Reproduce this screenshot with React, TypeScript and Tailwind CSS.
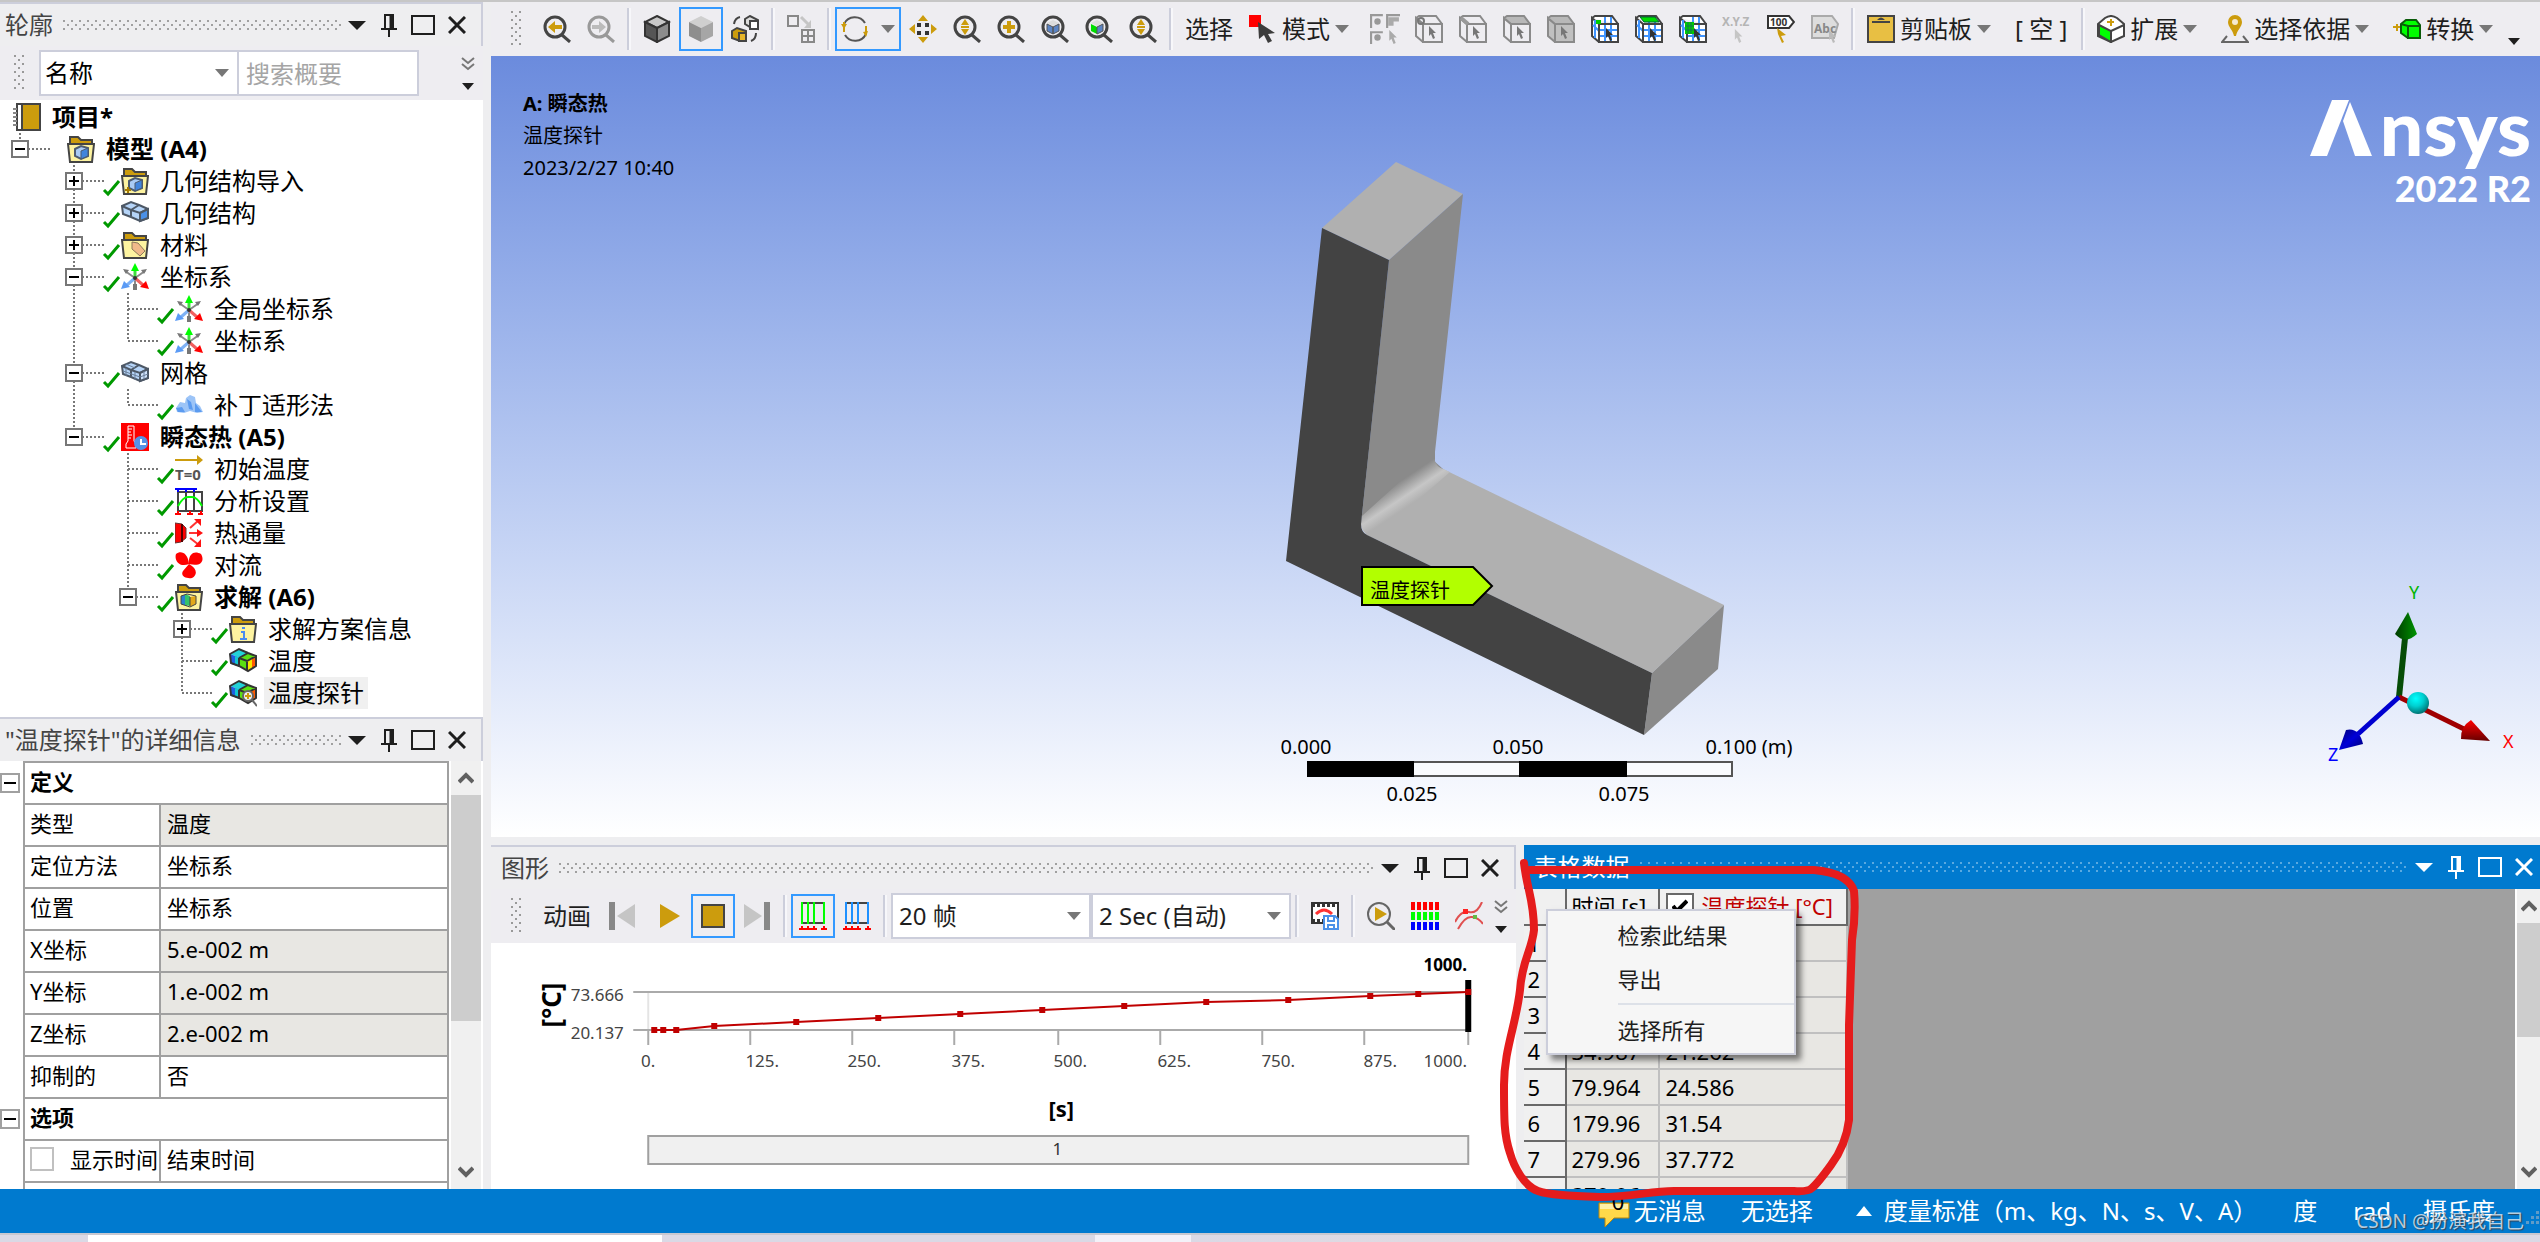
import type { ReactNode } from 'react';
import clsx from 'clsx';

interface TreeNode {
  depth: number;
  label: string;
  suffix?: string;
  icon: ReactNode;
  box?: 'plus' | 'minus';
  selected?: boolean;
}

interface DetailRow {
  name: string;
  value?: string;
  readOnly?: boolean;
}

const DARK = '#444';
const GOLD = '#cc9c0d';

/* ---------- tree icons ---------- */

function Icon({ children, size = 28 }: { children: ReactNode; size?: number }) {
  return (
    <svg width={size} height={size} viewBox="0 0 28 28" fill="none" className="shrink-0" aria-hidden="true">
      {children}
    </svg>
  );
}

function FolderShape({ children }: { children?: ReactNode }) {
  return (
    <Icon>
      <path d="M3 9V2h8l3 3h11v5" fill={GOLD} stroke={DARK} strokeWidth="2" />
      <path d="M1 9h26l-2 18H3z" fill="#fdf3a0" stroke={DARK} strokeWidth="2" />
      {children}
    </Icon>
  );
}

function SmallCube() {
  return (
    <>
      <path d="M8 14l6-3 7 2v8l-7 3-6-3z" fill="#a9cbf5" stroke="#4d5b70" strokeWidth="2" />
      <path d="M14 16l7-3v8l-7 3z" fill="#4285dc" stroke="#4d5b70" />
    </>
  );
}

function BlocksIcon({ mesh = false }: { mesh?: boolean }) {
  return (
    <Icon>
      <path d="M1 7l9-4 8 3 9 4v9l-8 3-9-4-8-3z" fill="#b5d4f8" stroke="#4d5866" strokeWidth="2" />
      <path d="M1 7l9 4v6M10 11l8-5M10 11l9 3 8-4" stroke="#4d5866" strokeWidth="2" />
      <path d="M19 14l8-4v9l-8 3z" fill={mesh ? '#cfe2fa' : '#4a90e8'} stroke="#4d5866" strokeWidth="2" />
      {mesh && <path d="M5 5l9 4M5 9v8M14 13v8M19 18l8-3M23 12v8M2 12l17 6" stroke="#6b7f99" />}
    </Icon>
  );
}

function CoordIcon() {
  return (
    <Icon>
      <path d="M14 15L4 8M14 15l10-7M14 15v12" stroke="#8a8a8a" strokeWidth="2" />
      <path d="M2 6l6 1-3 4zM26 6l-6 1 3 4zM12 21h4v6h-4z" fill="#777" />
      <path d="M14 15V5" stroke="#3fdc3f" strokeWidth="3" />
      <path d="M14 0l4 8h-8z" fill="#0f0" />
      <path d="M14 15l-8 7" stroke="#7fb2f5" strokeWidth="3" />
      <path d="M0 26l3-8 6 6z" fill="#5b9bf5" />
      <path d="M14 15l8 7" stroke="#f06060" strokeWidth="3" />
      <path d="M28 26l-3-8-6 6z" fill="#f00" />
      <circle cx="14" cy="15" r="2" fill="#333" />
    </Icon>
  );
}

function ContourCube() {
  return (
    <>
      <path d="M1 7l9-5 9 3-7 6z" fill="#22d3d8" />
      <path d="M1 7l11 4v9L2 17z" fill="#1f5fe0" />
      <path d="M6 9l6 2v9l-6-2z" fill="#12c9d0" />
      <path d="M10 11l9-5 8 3v10l-8 5-9-5z" fill="#5be012" />
      <path d="M18 13l9-4v10l-8 5z" fill="#f5e800" />
      <path d="M23 12l4-2v9l-4 3z" fill="#ff5a00" />
      <path d="M1 7l9-5 9 4 8 3v10l-8 5-9-5-8-3zM10 11l9-5M10 11v8M10 11l8 3 9-5M18 14v9" stroke="#333" strokeWidth="2" />
    </>
  );
}

function GlassOverlay() {
  return (
    <>
      <circle cx="19" cy="17" r="5" fill="#eee" stroke="#666" strokeWidth="2" />
      <path d="M23 21l5 6" stroke="#666" strokeWidth="2" />
      <path d="M19 14v6M16 17h6" stroke={GOLD} strokeWidth="2" />
    </>
  );
}

const tree: TreeNode[] = [
  {
    depth: 0,
    label: '项目',
    suffix: '*',
    icon: (
      <Icon>
        <path d="M4 1h23v26H4z" fill="#fff" stroke={DARK} strokeWidth="2" />
        <path d="M9 1h18v26H9z" fill={GOLD} stroke={DARK} strokeWidth="2" />
        <path d="M0 6h4M0 10h4M0 14h4M0 18h4M0 22h4" stroke="#888" strokeWidth="2" />
      </Icon>
    ),
  },
  { depth: 1, label: '模型', suffix: ' (A4)', box: 'minus', icon: <FolderShape><SmallCube /></FolderShape> },
  {
    depth: 2,
    label: '几何结构导入',
    box: 'plus',
    icon: (
      <FolderShape>
        <SmallCube />
        <path d="M7 20v6M4 23h6" stroke="#a87c00" strokeWidth="2" />
      </FolderShape>
    ),
  },
  { depth: 2, label: '几何结构', box: 'plus', icon: <BlocksIcon /> },
  {
    depth: 2,
    label: '材料',
    box: 'plus',
    icon: (
      <FolderShape>
        <path d="M11 11l6 1 7 8-5 5-8-7z" fill="#f0b98a" stroke="#8a7a5a" />
      </FolderShape>
    ),
  },
  { depth: 2, label: '坐标系', box: 'minus', icon: <CoordIcon /> },
  { depth: 3, label: '全局坐标系', icon: <CoordIcon /> },
  { depth: 3, label: '坐标系', icon: <CoordIcon /> },
  { depth: 2, label: '网格', box: 'minus', icon: <BlocksIcon mesh /> },
  {
    depth: 3,
    label: '补丁适形法',
    icon: (
      <Icon>
        <path d="M1 17l4-6 5 1 1-5 4-3 5 2 1 6 4 3 3 6-6 1-7-2-6 2-7-1z" fill="#9cc4f7" />
        <path d="M12 8l4 3 2 8-4-1zM1 17l6-1 3 5-7 0zM20 12l7 9-7 0z" fill="#5b9bf0" />
      </Icon>
    ),
  },
  {
    depth: 2,
    label: '瞬态热',
    suffix: ' (A5)',
    box: 'minus',
    icon: (
      <Icon>
        <path d="M0 0h28v28H0z" fill="#f00" />
        <path d="M7 3h6v15l2 3v4H5v-4l2-3z" stroke="#fff" strokeWidth="1" />
        <path d="M7 6h4M7 9h3M7 12h4M7 15h3" stroke="#fff" />
        <circle cx="20" cy="20" r="7" fill="#5591e6" />
        <path d="M20 16v5h5" stroke="#fff" strokeWidth="2" />
      </Icon>
    ),
  },
  {
    depth: 3,
    label: '初始温度',
    icon: (
      <Icon>
        <path d="M0 5h24" stroke={GOLD} strokeWidth="2" />
        <path d="M22 0l6 5-6 5z" fill={GOLD} />
        <text x="0" y="25" fontSize="15" fontWeight="700" fill="#555">T=0</text>
      </Icon>
    ),
  },
  {
    depth: 3,
    label: '分析设置',
    icon: (
      <Icon>
        <path d="M3 5h24v19H3zM11 3v21M19 3v21" stroke={DARK} strokeWidth="2" />
        <path d="M0 2h22M3 2v3M11 2v3M19 2v3" stroke="#00f" strokeWidth="2" />
        <path d="M3 19q5-9 10-9h4q5 0 10 9" stroke="#0f0" strokeWidth="2" />
        <path d="M0 27h6M12 27h6M23 27h6M3 24v3M15 24v3M26 24v3" stroke="#f00" strokeWidth="2" />
      </Icon>
    ),
  },
  {
    depth: 3,
    label: '热通量',
    icon: (
      <Icon>
        <path d="M0 4l7 1 4 4v10l-5 4-6 1z" fill="#f00" stroke="#633" strokeWidth="1" />
        <path d="M7 5v18" stroke="#500" strokeWidth="2" />
        <path d="M14 14h12M15 9l9-8M15 19l9 7" stroke="#f33" strokeWidth="2" />
        <path d="M22 10l6 4-6 4zM19 0h7v7zM26 20v8h-7z" fill="#f11" />
      </Icon>
    ),
  },
  {
    depth: 3,
    label: '对流',
    icon: (
      <Icon>
        <path d="M14 13C4 17-1 9 1 3c5-4 12-1 13 10zM14 13C13 3 19-1 26 3c4 7 0 13-12 10zM14 13c8 4 9 11 3 14-6 1-12-2-9-7z" fill="#f00" />
      </Icon>
    ),
  },
  {
    depth: 3,
    label: '求解',
    suffix: ' (A6)',
    box: 'minus',
    icon: (
      <FolderShape>
        <path d="M6 13l6-2v12l-6-2z" fill="#2a7fd0" />
        <path d="M10 11l5 2v10l-5-1z" fill="#35c26a" />
        <path d="M15 14l6-1v8l-6 3z" fill="#e3a81a" />
        <path d="M6 13l6-2 9 2v8l-6 3-9-3zM15 14v9" stroke={DARK} />
      </FolderShape>
    ),
  },
  {
    depth: 4,
    label: '求解方案信息',
    box: 'plus',
    icon: (
      <FolderShape>
        <path d="M13 13h3M12 17h3v7M11 24h7" stroke="#4a8cf0" strokeWidth="2" />
      </FolderShape>
    ),
  },
  { depth: 4, label: '温度', icon: <Icon><ContourCube /></Icon> },
  { depth: 4, label: '温度探针', selected: true, icon: <Icon><ContourCube /><GlassOverlay /></Icon> },
];

// true when a later sibling exists on the given level, so its guide line goes on
function levelContinues(index: number, depth: number) {
  for (let i = index + 1; i < tree.length; i++) {
    if (tree[i].depth < depth) return false;
    if (tree[i].depth === depth) return true;
  }
  return false;
}

function TreeGutter({ node, index }: { node: TreeNode; index: number }) {
  const width = 13 + 54 * node.depth;
  const ownX = 20 + 54 * (node.depth - 1);
  const levels = Array.from({ length: node.depth }, (_, i) => i + 1);
  return (
    <svg width={width} height="32" fill="none" className="shrink-0" aria-hidden="true">
      {levels.map((level) => {
        const x = 20 + 54 * (level - 1);
        const goesOn = levelContinues(index, level);
        if (level < node.depth && !goesOn) return null;
        return (
          <path key={level} d={`M${x} 0V${goesOn ? 32 : 16}`} stroke="#777" strokeWidth="2" strokeDasharray="2 2" />
        );
      })}
      {node.depth > 0 && (
        <path d={`M${ownX} 16h30`} stroke="#777" strokeWidth="2" strokeDasharray="2 2" />
      )}
      {node.box && (
        <>
          <rect x={ownX - 8} y="8" width="16" height="16" fill="#fff" stroke="#777" strokeWidth="2" />
          <path d={`M${ownX - 5} 16h10`} stroke="#000" strokeWidth="2" />
          {node.box === 'plus' && <path d={`M${ownX} 11v10`} stroke="#000" strokeWidth="2" />}
        </>
      )}
      {node.depth > 1 && (
        <path d={`M${width - 17} 25l4 4L${width - 2} 16`} stroke="#090" strokeWidth="3" />
      )}
    </svg>
  );
}

/* ---------- shared chrome ---------- */

function Dots({ id, color }: { id: string; color: string }) {
  return (
    <svg className="h-[10px] min-w-0 flex-1" aria-hidden="true">
      <defs>
        <pattern id={id} width="8" height="8" patternUnits="userSpaceOnUse">
          <path d="M0 0h2v2H0zM4 4h2v2H4z" fill={color} />
        </pattern>
      </defs>
      <rect width="100%" height="100%" fill={`url(#${id})`} />
    </svg>
  );
}

function Grip() {
  return (
    <svg width="12" height="36" className="shrink-0" fill="#999" aria-hidden="true">
      {[0, 8, 16, 24, 32].map((y) => (
        <path key={y} d={`M0 ${y}h2v2h-2zM8 ${y}h2v2h-2zM4 ${y + 4}h2v2h-2z`} />
      ))}
    </svg>
  );
}

function Caret({ color = '#777' }: { color?: string }) {
  return (
    <svg width="14" height="8" className="pointer-events-none shrink-0" aria-hidden="true">
      <path d="M0 0h14L7 8z" fill={color} />
    </svg>
  );
}

function PanelTitle({ id, title, active = false, inset = false }: { id: string; title: string; active?: boolean; inset?: boolean }) {
  const ink = active ? '#fff' : '#1e1e1e';
  return (
    <header
      className={clsx(
        'flex h-[44px] shrink-0 items-center text-2xl',
        inset ? 'pl-[10px]' : 'pl-[5px]',
        active ? 'bg-[#007acf] text-white' : 'border-t-2 border-r-2 border-[#cccedb] bg-[#eeeef0] text-[#444]'
      )}
    >
      <h2 className="mr-[10px] whitespace-nowrap">{title}</h2>
      <Dots id={id} color={active ? '#59a9e0' : '#a0a0a0'} />
      <div className={clsx('ml-[6px] flex items-center gap-3', active ? 'pr-[6px]' : 'pr-[14px]')}>
        <button aria-label="菜单" className="flex h-6 w-5 items-center justify-center">
          <svg width="18" height="9"><path d="M0 0h18L9 9z" fill={ink} /></svg>
        </button>
        <button aria-label="固定" className="flex h-6 w-5 items-center justify-center">
          <svg width="18" height="24" fill="none" stroke={ink} strokeWidth="2">
            <path d="M5 15V2h8v13M1 16h16M9 16v8" />
            <path d="M11 3v12" strokeWidth="3" />
          </svg>
        </button>
        <button aria-label="最大化" className="flex h-6 w-6 items-center justify-center">
          <svg width="24" height="20" fill="none" stroke={ink} strokeWidth="2"><path d="M1 1h22v18H1z" /></svg>
        </button>
        <button aria-label="关闭" className="flex h-6 w-5 items-center justify-center">
          <svg width="18" height="18" fill="none" stroke={ink} strokeWidth="3"><path d="M1 1l16 16M17 1L1 17" /></svg>
        </button>
      </div>
    </header>
  );
}

function Separator() {
  return <div className="mx-1 h-[42px] w-[4px] shrink-0 border-l-2 border-[#cccedb] bg-[#f7f7fa]" />;
}

function ToolButton({ label, active = false, children }: { label: string; active?: boolean; children: ReactNode }) {
  return (
    <button
      aria-label={label}
      className={clsx('flex h-[44px] w-[44px] shrink-0 items-center justify-center', active && 'border-2 border-[#3399ff]')}
    >
      {children}
    </button>
  );
}

function TextButton({ label, icon, caret = true }: { label: string; icon?: ReactNode; caret?: boolean }) {
  return (
    <button className="flex h-[44px] shrink-0 items-center gap-[5px] whitespace-nowrap text-2xl text-[#1e1e1e]">
      {icon}
      <span>{label}</span>
      {caret && <Caret />}
    </button>
  );
}

function Overflow() {
  return (
    <button aria-label="更多" className="flex w-5 shrink-0 flex-col items-center gap-3">
      <svg width="14" height="14" fill="none" stroke="#777" strokeWidth="2">
        <path d="M1 1l6 5 6-5M1 7l6 5 6-5" />
      </svg>
      <svg width="12" height="7"><path d="M0 0h12L6 7z" fill="#1e1e1e" /></svg>
    </button>
  );
}

function ScrollArrow({ up = false }: { up?: boolean }) {
  return (
    <button aria-label={up ? '向上滚动' : '向下滚动'} className="flex h-[34px] w-full shrink-0 items-center justify-center">
      <svg width="16" height="12" fill="none" stroke="#606060" strokeWidth="4">
        <path d={up ? 'M1 10l7-7 7 7' : 'M1 2l7 7 7-7'} />
      </svg>
    </button>
  );
}

/* ---------- toolbar icons ---------- */

function Lens({ stroke = DARK, children }: { stroke?: string; children?: ReactNode }) {
  return (
    <Icon>
      <circle cx="12" cy="12" r="10" stroke={stroke} strokeWidth="3" />
      <path d="M19 20l8 7" stroke={stroke} strokeWidth="3" />
      {children}
    </Icon>
  );
}

function FitArrows() {
  return <path d="M12 4l4 6H8zM12 20l4-6H8zM8 11h8v2H8z" fill={GOLD} />;
}

function Cube({ top, left, right, edge }: { top: string; left: string; right: string; edge?: string }) {
  return (
    <Icon>
      <g stroke={edge} strokeWidth="2">
        <path d="M14 1l12 6-12 6L2 7z" fill={top} />
        <path d="M2 7l12 6v14L2 21z" fill={left} />
        <path d="M26 7l-12 6v14l12-6z" fill={right} />
      </g>
    </Icon>
  );
}

function CursorMark({ x, y, color = '#777' }: { x: number; y: number; color?: string }) {
  return <path d={`M${x} ${y}l7 7-3 0 2 5-2 1-2-5-2 2z`} fill={color} />;
}

function PickBox({ top, front, vertex = false, edge = false }: { top?: string; front?: string; vertex?: boolean; edge?: boolean }) {
  return (
    <Icon>
      <path d="M8 9L1 3v18l7 6z" fill={front} stroke="#8a8a8a" strokeWidth="2" />
      <path d="M1 3l3-2h17l6 8H8z" fill={top} stroke="#8a8a8a" strokeWidth="2" />
      <path d="M8 9h19v18H8z" fill={front} stroke="#8a8a8a" strokeWidth="2" />
      {vertex && <circle cx="6" cy="6" r="3" stroke="#777" strokeWidth="2" />}
      {edge && <path d="M2 3l7 6" stroke="#999" strokeWidth="4" />}
      <CursorMark x={14} y={11} />
    </Icon>
  );
}

function MeshBox({ mark }: { mark: 'node' | 'face' | 'element' }) {
  return (
    <Icon>
      <path d="M8 9L1 3v18l7 6zM1 3l3-2h17l6 8v18H8V9h19" fill="#fff" stroke={DARK} strokeWidth="2" />
      <path d="M14 2v25M20 2v25M9 15h17M9 21h17M4 5v18M2 10l6 6" stroke="#3f94ff" strokeWidth="2" />
      <path d="M8 9h19v18H8z" stroke={DARK} strokeWidth="2" />
      {mark === 'node' && <path d="M5 5h5v4H5z" fill="#0c0" />}
      {mark === 'face' && <path d="M5 2h15l4 5H9z" fill="#0d0" stroke="#063" />}
      {mark === 'element' && (
        <>
          <path d="M6 7h9v12H6z" fill="#0c0" />
          <path d="M9 7v12M12 7v12M6 11h9M6 15h9" stroke="#175" />
        </>
      )}
      <CursorMark x={15} y={13} color="#333" />
    </Icon>
  );
}

function TopToolbar() {
  return (
    <div className="flex h-[54px] shrink-0 items-center overflow-hidden bg-[#eeedf1] pr-5 pl-5">
      <Grip />
      <div className="ml-3 flex items-center">
        <ToolButton label="上一视图"><Lens><path d="M5 12l7-6v4h7v4h-7v4z" fill={GOLD} /></Lens></ToolButton>
        <ToolButton label="下一视图"><Lens stroke="#999"><path d="M19 12l-7-6v4H5v4h7v4z" fill="#bbb" /></Lens></ToolButton>
      </div>
      <Separator />
      <ToolButton label="线框实体"><Cube top="#c8c8c8" left="#555" right="#8c8c8c" edge="#333" /></ToolButton>
      <ToolButton label="实体" active><Cube top="#cfcfcf" left="#8e8e8e" right="#a6a6a6" /></ToolButton>
      <ToolButton label="显示切换">
        <Icon>
          <path d="M14 4l5-3 8 4v9l-8-2-5-3z" fill="#ddd" stroke={DARK} strokeWidth="2" />
          <path d="M19 6h8v8h-8z" fill="#fff" stroke={DARK} strokeWidth="2" />
          <path d="M1 16l5-3 9 3v10H9l-8-3z" fill={GOLD} stroke={DARK} strokeWidth="2" />
          <path d="M8 18h7v8H8z" fill="#e5b52a" stroke={DARK} strokeWidth="2" />
          <path d="M3 9q1-6 6-7M25 18q0 6-5 8" stroke={DARK} strokeWidth="2" />
        </Icon>
      </ToolButton>
      <Separator />
      <ToolButton label="爆炸视图">
        <Icon>
          <path d="M1 1h10v10H1zM15 15h12v12H15zM21 15v12M15 21h12" stroke="#888" strokeWidth="2" />
          <path d="M14 2l8 8" stroke="#c5c5c5" strokeWidth="3" /><path d="M24 5v8h-7z" fill="#c5c5c5" />
        </Icon>
      </ToolButton>
      <Separator />
      <button aria-label="旋转" className="flex h-[44px] w-[66px] shrink-0 items-center justify-center gap-3 border-2 border-[#3399ff]">
        <Icon>
          <path d="M3 9A12 12 0 0 1 24 8M25 19A12 12 0 0 1 4 20" stroke="#555" strokeWidth="2" />
          <path d="M3 7v10M25 11v9" stroke={GOLD} strokeWidth="2" />
          <path d="M0 9h6l-3 5zM22 17l5-1-2 6z" fill={GOLD} />
        </Icon>
        <Caret />
      </button>
      <ToolButton label="平移">
        <Icon>
          <path d="M14 0l5 6H9zM14 28l5-6H9zM0 14l6-5v10zM28 14l-6-5v10z" fill={GOLD} />
          <path d="M8 8h4v4H8zM16 8h4v4h-4zM8 16h4v4H8zM16 16h4v4h-4z" fill="#333" />
        </Icon>
      </ToolButton>
      <ToolButton label="缩放"><Lens><FitArrows /></Lens></ToolButton>
      <ToolButton label="放大"><Lens><path d="M10 6h4v4h4v4h-4v4h-4v-4H6v-4h4z" fill={GOLD} /></Lens></ToolButton>
      <ToolButton label="框选缩放"><Lens><path d="M6 8l6-3 6 3-6 3z" fill="#ddd" /><path d="M6 9l6 3v7l-6-3zM18 9l-6 3v7l6-3z" fill="#5b84c4" stroke="#555" /></Lens></ToolButton>
      <ToolButton label="适合选择"><Lens><path d="M6 8l6-3 6 3-6 3z" fill="#ddd" /><path d="M6 9l6 3v7l-6-3z" fill="#0d0" /><path d="M18 9l-6 3v7l6-3z" fill="#5b84c4" stroke="#555" /></Lens></ToolButton>
      <ToolButton label="适合窗口"><Lens><FitArrows /></Lens></ToolButton>
      <Separator />
      <div className="ml-2 flex items-center gap-4">
        <TextButton label="选择" caret={false} />
        <TextButton
          label="模式"
          icon={
            <Icon>
              <path d="M0 0h12v12H0z" fill="#f00" />
              <path d="M9 7l17 11-7 1 4 7-4 2-4-8-5 4z" fill="#3c3c3c" />
            </Icon>
          }
        />
      </div>
      <div className="ml-[14px] flex items-center">
        <ToolButton label="智能选择">
          <Icon size={30}>
            <path d="M1 13V1h11M16 13V1h12M1 28V17h11" stroke="#999" strokeWidth="2" />
            <path d="M17 3h10v4h-5v4h-5z" fill="#aaa" />
            <circle cx="7" cy="7" r="3" fill="#999" /><circle cx="7" cy="22" r="3" fill="#999" />
            <CursorMark x={18} y={15} color="#aaa" />
          </Icon>
        </ToolButton>
        <ToolButton label="顶点"><PickBox vertex /></ToolButton>
        <ToolButton label="边"><PickBox edge /></ToolButton>
        <ToolButton label="面"><PickBox top="#b8b8b8" /></ToolButton>
        <ToolButton label="体"><PickBox top="#b8b8b8" front="#c0c0c0" /></ToolButton>
        <ToolButton label="节点"><MeshBox mark="node" /></ToolButton>
        <ToolButton label="单元面"><MeshBox mark="face" /></ToolButton>
        <ToolButton label="单元"><MeshBox mark="element" /></ToolButton>
        <ToolButton label="坐标">
          <Icon size={30}>
            <text x="0" y="11" fontSize="11" fontWeight="700" fill="#b5b5b5">X.Y.Z</text>
            <CursorMark x={12} y={14} color="#c5c5c5" />
          </Icon>
        </ToolButton>
        <ToolButton label="标签">
          <Icon>
            <path d="M1 1h21l5 6-5 6H1z" fill="#fff" stroke="#333" strokeWidth="2" />
            <text x="3" y="11" fontSize="10" fontWeight="700" fill="#333">100</text>
            <path d="M10 13l9 7-5 1 3 6-2 1-4-9z" fill={GOLD} />
          </Icon>
        </ToolButton>
        <ToolButton label="注释">
          <Icon>
            <path d="M1 1h20l6 8-4 14H1z" fill="#ddd" stroke="#aaa" strokeWidth="2" />
            <text x="3" y="18" fontSize="12" fontWeight="700" fill="#888">Abc</text>
            <CursorMark x={18} y={15} color="#bbb" />
          </Icon>
        </ToolButton>
      </div>
      <Separator />
      <div className="ml-2 flex items-center">
        <TextButton
          label="剪贴板"
          icon={
            <Icon>
              <path d="M1 1h26v26H1z" fill="#e8bf43" stroke={DARK} strokeWidth="2" />
              <path d="M5 6h18v2H5zM10 5q4-5 8 0z" fill={DARK} />
            </Icon>
          }
        />
      </div>
      <div className="mr-[10px] ml-6"><TextButton label="[ 空 ]" caret={false} /></div>
      <Separator />
      <div className="ml-2 flex items-center gap-6">
        <TextButton
          label="扩展"
          icon={
            <Icon>
              <path d="M1 9l7-6q6-4 12 0l7 6v12l-13 6-13-6z" fill="#fff" stroke={DARK} strokeWidth="2" />
              <path d="M2 10l12 6v11L2 20z" fill="#0f0" stroke={DARK} strokeWidth="2" />
              <path d="M14 16l13-6" stroke={DARK} strokeWidth="2" />
              <path d="M14 4v7M10 7h7" stroke={GOLD} strokeWidth="2" />
            </Icon>
          }
        />
        <TextButton
          label="选择依据"
          icon={
            <Icon>
              <path d="M14 0a7 7 0 0 1 7 7c0 5-5 8-6 14h-2C12 15 7 12 7 7a7 7 0 0 1 7-7z" fill={GOLD} />
              <circle cx="14" cy="7" r="3" fill="#f5ead0" />
              <path d="M6 21l-5 6h26l-5-6" stroke="#666" strokeWidth="2" />
            </Icon>
          }
        />
        <TextButton
          label="转换"
          icon={
            <Icon>
              <path d="M0 12h7M4 9v7" stroke={GOLD} strokeWidth="2" />
              <path d="M8 9l5-4h10l4 5v13H15l-7-5z" fill="#0f0" stroke="#0a5a0a" strokeWidth="2" />
              <path d="M8 9l7 2h12M15 11v13" stroke="#0a5a0a" strokeWidth="2" />
            </Icon>
          }
        />
      </div>
      <button aria-label="更多工具" className="mt-6 ml-auto">
        <svg width="12" height="7"><path d="M0 0h12L6 7z" fill="#1e1e1e" /></svg>
      </button>
    </div>
  );
}

/* ---------- left column ---------- */

function OutlinePanel() {
  return (
    <section className="flex shrink-0 flex-col">
      <PanelTitle id="outline-dots" title="轮廓" />
      <div className="flex h-[54px] items-center bg-[#eeedf1] pr-[5px] pl-[14px]">
        <Grip />
        <div className="ml-[13px] flex h-[46px] w-[200px] items-center border-2 border-[#cccedb] bg-white pr-2">
          <select aria-label="过滤方式" className="h-full flex-1 appearance-none bg-transparent pl-1 text-2xl outline-none">
            <option>名称</option>
          </select>
          <Caret />
        </div>
        <input
          type="text"
          aria-label="搜索概要"
          placeholder="搜索概要"
          className="h-[46px] w-[180px] border-2 border-l-0 border-[#cccedb] bg-white pl-[7px] text-2xl outline-none placeholder:text-[#a5a5a5]"
        />
        <div className="ml-auto flex"><Overflow /></div>
      </div>
      <ul className="h-[617px] bg-white pt-px">
        {tree.map((node, i) => (
          <li key={i} className="flex h-8 items-center">
            <TreeGutter node={node} index={i} />
            {node.icon}
            <span
              className={clsx(
                'ml-[7px] h-8 px-[4px] text-2xl leading-8 whitespace-pre text-black',
                node.suffix && 'font-bold',
                node.selected && 'bg-[#f0f0f0]'
              )}
            >
              {node.label}{node.suffix}
            </span>
          </li>
        ))}
      </ul>
    </section>
  );
}

const details: DetailRow[] = [
  { name: '定义' },
  { name: '类型', value: '温度', readOnly: true },
  { name: '定位方法', value: '坐标系' },
  { name: '位置', value: '坐标系' },
  { name: 'X坐标', value: '5.e-002 m', readOnly: true },
  { name: 'Y坐标', value: '1.e-002 m', readOnly: true },
  { name: 'Z坐标', value: '2.e-002 m', readOnly: true },
  { name: '抑制的', value: '否' },
  { name: '选项' },
];

function DetailsPanel() {
  return (
    <section className="flex min-h-0 flex-1 flex-col">
      <PanelTitle id="details-dots" title={'"温度探针"的详细信息'} />
      <div className="flex min-h-0 flex-1 overflow-hidden bg-white">
        <table className="h-fit flex-1 table-fixed border-collapse text-[22px] leading-9 text-black">
          <colgroup>
            <col className="w-[24px]" />
            <col className="w-[136px]" />
            <col />
          </colgroup>
          <tbody>
            {details.map((row) => (
              <tr key={row.name} className="h-[42px]">
                <td className="p-0">
                  {!row.value && (
                    <button aria-label={`折叠${row.name}`} className="flex h-5 w-5 items-center justify-center border-2 border-[#a0a0a0] bg-white">
                      <span className="block h-[2px] w-3 bg-black" />
                    </button>
                  )}
                </td>
                {row.value ? (
                  <>
                    <td className="border-2 border-[#a0a0a0] p-0 pb-1 pl-[5px] whitespace-nowrap">{row.name}</td>
                    <td className={clsx('border-2 border-[#a0a0a0] p-0 pb-1 pl-[6px]', row.readOnly && 'bg-[#e8e7e3]')}>{row.value}</td>
                  </>
                ) : (
                  <td colSpan={2} className="border-2 border-[#a0a0a0] p-0 pb-1 pl-[5px] font-bold">{row.name}</td>
                )}
              </tr>
            ))}
            <tr className="h-[42px]">
              <td />
              <td className="border-2 border-[#a0a0a0] p-0 pb-1 pl-[5px]">
                <label className="flex items-center gap-4 overflow-hidden whitespace-nowrap">
                  <input type="checkbox" className="h-6 w-6 shrink-0 appearance-none border-2 border-[#c0c0c0] bg-white" />
                  显示时间
                </label>
              </td>
              <td className="border-2 border-[#a0a0a0] p-0 pb-1 pl-[6px]">结束时间</td>
            </tr>
            <tr className="h-[42px]">
              <td />
              <td colSpan={2} className="border-2 border-[#a0a0a0]" />
            </tr>
          </tbody>
        </table>
        <div className="mr-[2px] ml-[2px] flex w-[30px] flex-col bg-[#f0f0f0]">
          <ScrollArrow up />
          <div className="h-[226px] bg-[#cdcdcd]" />
          <div className="mt-auto"><ScrollArrow /></div>
        </div>
      </div>
    </section>
  );
}

/* ---------- 3D view ---------- */

function Viewport() {
  return (
    <div className="relative min-h-0 flex-1 overflow-hidden bg-linear-to-b from-[#6b8bdd] to-white">
      <div className="flex flex-col pt-[32px] pl-[32px] text-xl leading-8 text-black">
        <p className="font-bold">A: 瞬态热</p>
        <p>温度探针</p>
        <p>2023/2/27 10:40</p>
      </div>
      <svg viewBox="491 56 2049 781" className="absolute inset-0 h-full w-full" role="img" aria-label="模型">
        <defs>
          <linearGradient id="fillet" gradientUnits="userSpaceOnUse" x1="1393" y1="486" x2="1407" y2="507">
            <stop offset="0" stopColor="#8a8a8a" />
            <stop offset="0.6" stopColor="#c6c6c6" />
            <stop offset="1" stopColor="#b0b0b0" />
          </linearGradient>
          <radialGradient id="ball" cx="0.4" cy="0.3" r="0.7">
            <stop offset="0" stopColor="#0ff" />
            <stop offset="0.5" stopColor="#00cfd0" />
            <stop offset="1" stopColor="#007474" />
          </radialGradient>
          <linearGradient id="cone-y"><stop offset="0" stopColor="#003c00" /><stop offset="1" stopColor="#009400" /></linearGradient>
          <linearGradient id="cone-x" x2="0" y2="1"><stop offset="0" stopColor="#f00" /><stop offset="1" stopColor="#600" /></linearGradient>
          <linearGradient id="cone-z" x2="1" y2="1"><stop offset="0" stopColor="#000070" /><stop offset="0.5" stopColor="#0000d8" /><stop offset="1" stopColor="#000070" /></linearGradient>
        </defs>
        <path d="M1322 228L1396 162L1463 194L1389 260Z" fill="#b0b0b0" />
        <path d="M1389 260L1463 194L1434 461L1443 469L1367 535L1361 524Z" fill="#8a8a8a" />
        <path d="M1367 535L1443 469L1724 605L1652 673Z" fill="#b0b0b0" />
        <path d="M1362 516L1435 450V461Q1436 466 1443 469L1450 472L1374 538L1367 535Q1361 530 1361 524Z" fill="url(#fillet)" />
        <path d="M1652 673L1724 605L1718 669L1644 735Z" fill="#8a8a8a" />
        <path d="M1322 228L1389 260L1361 524Q1361 532 1367 535L1652 673L1644 735L1286 561Z" fill="#434343" />
        <path d="M1362 567H1473L1492 586L1473 605H1362Z" fill="#b2ff00" stroke="#000" strokeWidth="2" />
        <text x="1370" y="598" fontSize="20" fill="#000">温度探针</text>

        <rect x="1308" y="762" width="424" height="14" fill="#fff" fillOpacity="0.6" stroke="#555" strokeWidth="2" />
        <path d="M1307 761h107v16h-107zM1519 761h108v16h-108z" fill="#000" />
        <g fontSize="20" fill="#000" textAnchor="middle">
          <text x="1306" y="754">0.000</text>
          <text x="1518" y="754">0.050</text>
          <text x="1749" y="754">0.100 (m)</text>
          <text x="1412" y="801">0.025</text>
          <text x="1624" y="801">0.075</text>
        </g>

        <path d="M2399 697L2405 638" stroke="#064d06" strokeWidth="6" />
        <path d="M2408 612L2395 634Q2405 645 2417 634Z" fill="url(#cone-y)" />
        <path d="M2399 697L2466 730" stroke="#a00000" strokeWidth="5" />
        <path d="M2490 741L2471 720Q2460 727 2461 739Z" fill="url(#cone-x)" />
        <path d="M2399 697L2358 734" stroke="#0000d0" strokeWidth="5" />
        <path d="M2339 750L2346 730Q2359 727 2363 744Z" fill="url(#cone-z)" />
        <circle cx="2418" cy="703" r="11" fill="url(#ball)" />
        <text x="2409" y="599" fontSize="18" fill="#00b400">Y</text>
        <text x="2503" y="748" fontSize="18" fill="#f00">X</text>
        <text x="2328" y="761" fontSize="18" fill="#00f">Z</text>

        <path d="M2332 100H2349L2327 156H2310Z" fill="#fff" />
        <path d="M2350 102L2372 156H2355L2343 121Z" fill="#fff" />
        <text x="2531" y="156" fontSize="77" fontWeight="900" fill="#fff" textAnchor="end" fontFamily="Lato, sans-serif">nsys</text>
        <text x="2531" y="202" fontSize="36" fontWeight="900" fill="#fff" textAnchor="end" fontFamily="Lato, sans-serif">2022 R2</text>
      </svg>
    </div>
  );
}

/* ---------- graph ---------- */

const points = [
  [654, 1030], [663, 1030], [676, 1030], [714, 1026], [796, 1022], [878, 1018], [960, 1014], [1042, 1010],
  [1124, 1006], [1206, 1002], [1288, 1000], [1370, 996], [1418, 994], [1468, 992],
];

const ticks = [
  { x: 648, label: '0.' },
  { x: 750, label: '125.', at: 762 },
  { x: 852, label: '250.', at: 864 },
  { x: 954, label: '375.', at: 968 },
  { x: 1058, label: '500.', at: 1070 },
  { x: 1160, label: '625.', at: 1174 },
  { x: 1262, label: '750.', at: 1278 },
  { x: 1364, label: '875.', at: 1380 },
  { x: 1468, label: '1000.', at: 1445 },
];

function Chart() {
  return (
    <svg viewBox="491 943 1024 246" className="min-h-0 w-full flex-1 bg-white" role="img" aria-label="温度曲线">
      <path d="M633 992H1468M633 1030H1468" stroke="#aaa" strokeWidth="2" />
      <path d="M648 993V1029" stroke="#e4e4e4" strokeWidth="2" />
      {ticks.map((t) => (
        <path key={t.x} d={`M${t.x} 1031V1045`} stroke="#aaa" strokeWidth="2" />
      ))}
      <path d="M1468 980V1032" stroke="#000" strokeWidth="6" />
      <polyline points={points.map((p) => p.join(',')).join(' ')} fill="none" stroke="#c00000" strokeWidth="2" />
      {points.map(([x, y]) => (
        <rect key={x} x={x - 3} y={y - 3} width="6" height="6" fill="#c00000" />
      ))}
      <g fontSize="17" fill="#444" textAnchor="middle">
        {ticks.map((t) => (
          <text key={t.x} x={t.at ?? t.x} y="1067">{t.label}</text>
        ))}
        <text x="597" y="1001">73.666</text>
        <text x="597" y="1039">20.137</text>
      </g>
      <text x="1445" y="971" fontSize="17" fontWeight="700" textAnchor="middle">1000.</text>
      <text transform="translate(561 1005) rotate(-90)" fontSize="26" fontWeight="700" textAnchor="middle">[°C]</text>
      <text x="1061" y="1117" fontSize="22" fontWeight="700" textAnchor="middle">[s]</text>
      <rect x="648" y="1136" width="820" height="28" fill="#f0f0f0" stroke="#a0a0a0" strokeWidth="2" />
      <text x="1057" y="1155" fontSize="17" fill="#333" textAnchor="middle">1</text>
    </svg>
  );
}

function FrameSelect({ label, value }: { label: string; value: string }) {
  return (
    <div className="flex h-[46px] w-[200px] shrink-0 items-center border-2 border-[#cccedb] bg-white pr-2">
      <select aria-label={label} className="h-full min-w-0 flex-1 appearance-none bg-transparent pl-[6px] text-2xl text-[#1e1e1e] outline-none">
        <option>{value}</option>
      </select>
      <Caret />
    </div>
  );
}

function StepIcon({ color }: { color: string }) {
  return (
    <Icon>
      <path d="M3 1h22M3 21h22" stroke={DARK} strokeWidth="2" />
      <path d="M3 0v22M9 0v22M15 0v22M25 0v22" stroke={color} strokeWidth="2" />
      <path d="M0 27h18M22 27h6M3 24v3M9 24v3M15 24v3M25 24v3" stroke="#f00" strokeWidth="2" />
    </Icon>
  );
}

function GraphPanel() {
  return (
    <section className="mr-2 flex w-1/2 shrink-0 flex-col">
      <PanelTitle id="graph-dots" title="图形" inset />
      <div className="flex h-[54px] shrink-0 items-center bg-[#eeedf1] pr-3 pl-5">
        <Grip />
        <span className="mr-[6px] ml-5 shrink-0 text-2xl whitespace-nowrap text-[#1e1e1e]">动画</span>
        <div className="flex shrink-0 items-center">
          <button aria-label="首帧" className="flex h-[44px] w-[50px] items-center justify-center">
            <Icon><path d="M1 0h6v28H1z" fill="#888" /><path d="M27 2v24L9 14z" fill="#c5c5c5" /></Icon>
          </button>
          <ToolButton label="播放"><Icon><path d="M5 2l20 12L5 26z" fill={GOLD} /></Icon></ToolButton>
          <ToolButton label="停止" active><Icon><path d="M3 3h22v22H3z" fill={GOLD} stroke={DARK} strokeWidth="2" /></Icon></ToolButton>
          <ToolButton label="末帧">
            <Icon><path d="M21 0h6v28h-6z" fill="#888" /><path d="M1 2v24l18-12z" fill="#c5c5c5" /></Icon>
          </ToolButton>
        </div>
        <Separator />
        <ToolButton label="结果集" active><StepIcon color="#0f0" /></ToolButton>
        <ToolButton label="分布"><StepIcon color="#1e90ff" /></ToolButton>
        <Separator />
        <FrameSelect label="帧数" value="20 帧" />
        <FrameSelect label="时长" value="2 Sec (自动)" />
        <Separator />
        <ToolButton label="导出视频">
          <Icon>
            <path d="M1 1h26v20H1z" fill="#fff" stroke="#333" strokeWidth="2" />
            <path d="M1 3h26M1 19h12" stroke="#333" strokeWidth="4" strokeDasharray="3 2" />
            <path d="M5 12q8-8 16 0" stroke="#f33" strokeWidth="3" />
            <path d="M13 14h11l3 3v10H13z" fill="#fff" stroke="#4a90e8" strokeWidth="2" />
            <path d="M17 14v5h6v-5M17 27v-4h6v4" stroke="#4a90e8" strokeWidth="2" />
          </Icon>
        </ToolButton>
        <Separator />
        <ToolButton label="缩放播放">
          <Icon>
            <circle cx="12" cy="12" r="11" stroke="#666" strokeWidth="2" />
            <path d="M20 20l8 8" stroke="#666" strokeWidth="3" />
            <path d="M8 5l12 7-12 7z" fill={GOLD} />
          </Icon>
        </ToolButton>
        <ToolButton label="图例">
          <Icon>
            <path d="M0 4h28" stroke="#f00" strokeWidth="8" strokeDasharray="4 2" />
            <path d="M0 14h28" stroke="#0f0" strokeWidth="8" strokeDasharray="4 2" />
            <path d="M0 24h28" stroke="#00f" strokeWidth="8" strokeDasharray="4 2" />
          </Icon>
        </ToolButton>
        <ToolButton label="曲线">
          <Icon>
            <path d="M0 20Q6 8 14 10T27 0M3 27Q10 14 17 15t11 7" stroke="#e05050" strokeWidth="2" />
            <path d="M8 7h5v5H8z" fill="#f22" /><path d="M18 13h4v4h-4z" fill="#6b4" />
          </Icon>
        </ToolButton>
        <Overflow />
      </div>
      <Chart />
    </section>
  );
}

/* ---------- tabular data ---------- */

const rows = [
  ['', ''],
  ['', ''],
  ['', ''],
  ['34.987', '21.262'],
  ['79.964', '24.586'],
  ['179.96', '31.54'],
  ['279.96', '37.772'],
  ['379.96', '43.454'],
];

function ContextMenu() {
  return (
    <div
      role="menu"
      className="absolute top-[64px] left-[22px] flex w-[250px] flex-col border-2 border-[#cccedb] bg-[#f6f6f6] pt-[2px] pl-[70px] text-[22px] text-[#1e1e1e] shadow-[5px_5px_6px_rgba(0,0,0,0.5)]"
    >
      <button role="menuitem" className="h-[44px] text-left">检索此结果</button>
      <button role="menuitem" className="h-[44px] text-left">导出</button>
      <div className="my-[2px] h-[2px] bg-[#dde1e8]" />
      <button role="menuitem" className="h-[46px] text-left">选择所有</button>
    </div>
  );
}

function TablePanel() {
  return (
    <section className="relative flex min-w-0 flex-1 flex-col">
      <PanelTitle id="table-dots" title="表格数据" active inset />
      <div className="flex min-h-0 flex-1 overflow-hidden bg-[#a0a0a0]">
        <table className="h-fit w-[324px] table-fixed border-collapse text-[22px] text-black">
          <colgroup>
            <col className="w-[42px]" />
            <col className="w-[93px]" />
            <col />
          </colgroup>
          <thead>
            <tr className="h-[36px] bg-[#f0f0f0]">
              <th className="border-r-2 border-b-2 border-[#696969]" />
              <th className="border-r-2 border-b-2 border-[#696969] p-0 pl-[5px] text-left font-normal whitespace-nowrap">时间 [s]</th>
              <th className="border-r-2 border-b-2 border-[#696969] p-0 pl-[6px] text-left font-normal whitespace-nowrap">
                <label className="flex items-center gap-2 text-[#c00000]">
                  <span className="relative flex h-7 w-7 shrink-0 border-2 border-[#696969] bg-white">
                    <input type="checkbox" defaultChecked className="h-full w-full appearance-none" />
                    <svg width="16" height="16" className="pointer-events-none absolute top-[4px] left-[4px]" fill="none" stroke="#000" strokeWidth="4">
                      <path d="M1 7l4 5L15 2" />
                    </svg>
                  </span>
                  温度探针 [°C]
                </label>
              </th>
            </tr>
          </thead>
          <tbody>
            {rows.map(([time, temp], i) => (
              <tr key={i} className="h-[36px] bg-[#e8e7e3]">
                <th className="border-r-2 border-b-2 border-[#696969] bg-[#f0f0f0] p-0 pl-[4px] text-left leading-[34px] font-normal">{i + 1}</th>
                <td className="border-r-2 border-b-2 border-[#c0c0c0] p-0 pl-[5px] leading-[34px]">{time}</td>
                <td className="border-r-2 border-b-2 border-[#c0c0c0] p-0 pl-[6px] leading-[34px]">{temp}</td>
              </tr>
            ))}
          </tbody>
        </table>
        <div className="ml-auto flex w-[25px] flex-col border-l-2 border-white bg-[#f0f0f0]">
          <ScrollArrow up />
          <div className="h-[114px] bg-[#cdcdcd]" />
          <div className="mt-auto"><ScrollArrow /></div>
        </div>
      </div>
      <ContextMenu />
      {/* hand-drawn marker loop around the table */}
      <svg width="360" height="370" viewBox="-24 0 360 370" className="pointer-events-none absolute top-0 -left-[24px] z-10" fill="none" aria-hidden="true">
        <path
          d="M6 25H290Q324 28 330 46Q332 70 328 95L325 180V275Q322 300 307 320Q294 338 288 343Q284 347 270 346H150C125 346 110 352 75 352C45 351 25 350 14 346C0 341-10 322-14 308C-20 290-20 275-20 240C-20 205-8 180-4 145C-2 115 8 105 10 85C10 55 3 45 0 18"
          stroke="#e51c1c"
          strokeWidth="8"
          strokeLinecap="round"
          strokeLinejoin="round"
        />
      </svg>
    </section>
  );
}

function StatusBar() {
  return (
    <footer className="relative flex h-[44px] shrink-0 items-center justify-end bg-[#007acf] pr-[45px] text-2xl whitespace-nowrap text-white">
      <button className="mr-[35px] flex items-center gap-1">
        <span className="relative">
          <svg width="32" height="28" viewBox="0 0 32 28" className="mt-2" aria-hidden="true">
            <path d="M1 2h30v15H16l-9 9v-9H1z" fill="#ffd94a" stroke="#b8860b" />
            <path d="M2 3h28v5H2z" fill="#fff0a8" />
          </svg>
          <span className="absolute -top-[6px] left-[14px] text-[22px] leading-7 text-black">0</span>
        </span>
        无消息
      </button>
      <span className="mr-[43px]">无选择</span>
      <button className="flex items-center gap-3">
        <svg width="16" height="10" aria-hidden="true"><path d="M0 10h16L8 0z" fill="#fff" /></svg>
        度量标准（m、kg、N、s、V、A）
      </button>
      <span className="mr-9 ml-9">度</span>
      <span className="mr-8">rad</span>
      <span>摄氏度</span>
      <span className="absolute right-4 bottom-0 text-[19px] leading-6 text-white/70 [text-shadow:1px_1px_1px_#345]">CSDN @扮演我自己</span>
      <svg width="14" height="14" className="absolute right-0 bottom-2" fill="#5f9bc8" aria-hidden="true">
        <path d="M10 0h3v3h-3zM5 5h3v3H5zM10 5h3v3h-3zM0 10h3v3H0zM5 10h3v3H5zM10 10h3v3h-3z" />
      </svg>
    </footer>
  );
}

export default function App() {
  return (
    <div className="flex h-screen flex-col overflow-hidden border-t-2 border-[#c6c6c6] bg-[#eeeef0] font-['Noto_Sans','Noto_Sans_CJK_SC',sans-serif]">
      <div className="flex min-h-0 flex-1">
        <aside className="mr-2 flex w-[483px] shrink-0 flex-col">
          <OutlinePanel />
          <DetailsPanel />
        </aside>
        <main className="flex min-w-0 flex-1 flex-col">
          <TopToolbar />
          <Viewport />
          <div className="mt-2 flex h-[344px] shrink-0">
            <GraphPanel />
            <TablePanel />
          </div>
        </main>
      </div>
      <StatusBar />
      <div className="flex h-[9px] shrink-0 border-t-2 border-[#c8c8d0] bg-[#dad9e5]">
        <div className="ml-[88px] w-[574px] bg-white" />
        <div className="ml-[433px] w-[96px] bg-[#f3f1f8]" />
        <div className="h-full flex-1 bg-linear-to-r from-[#dad9e5] via-[#eadcdc] to-[#dad9e5]" />
      </div>
    </div>
  );
}
